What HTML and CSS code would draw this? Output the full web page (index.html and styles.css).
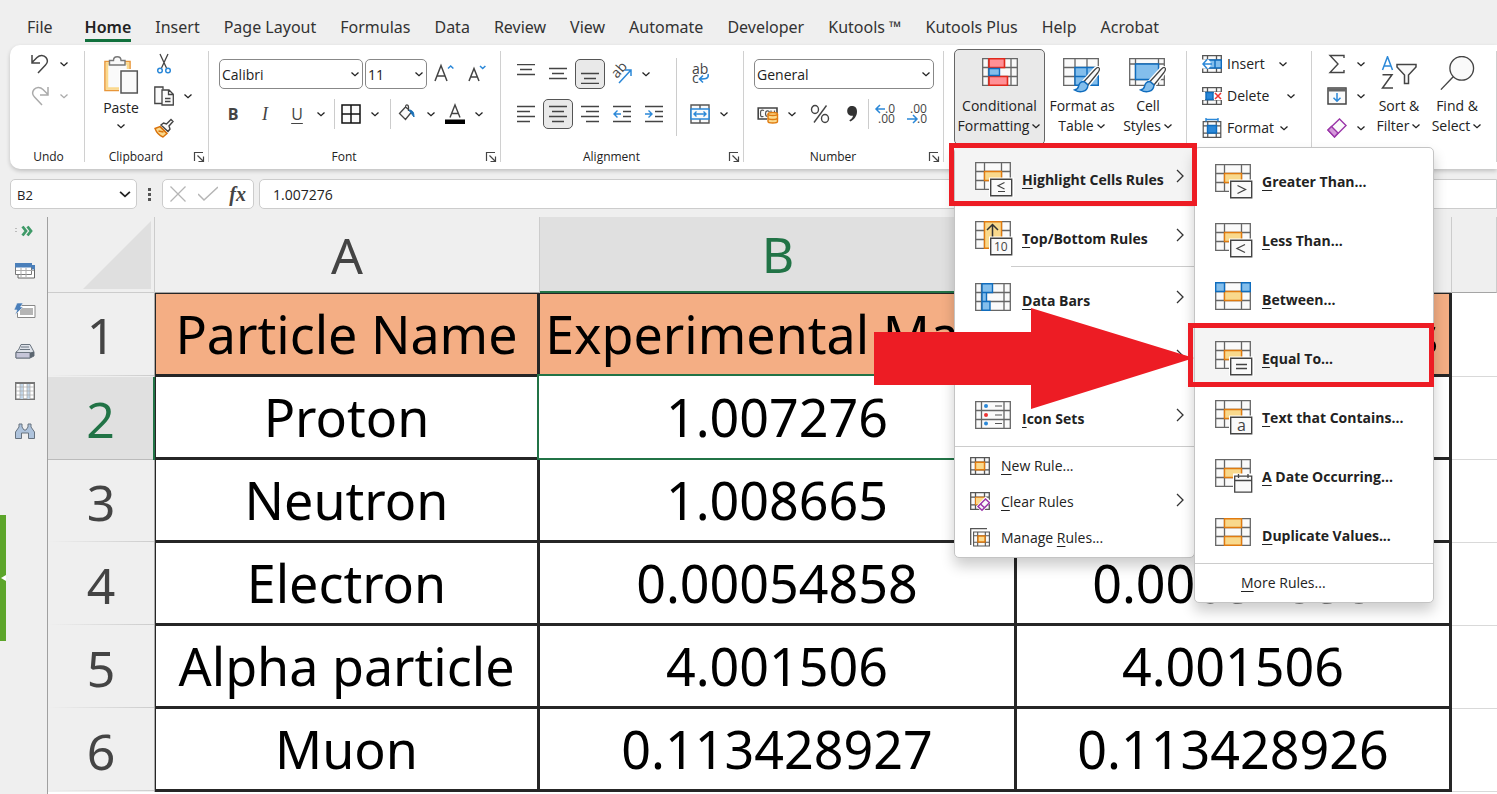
FILE: index.html
```html
<!DOCTYPE html>
<html lang="en">
<head>
<meta charset="utf-8">
<title>Particle masses</title>
<link rel="stylesheet" href="styles.css">
</head>
<body>
<svg class="defs" aria-hidden="true">
  <symbol id="chev" viewBox="0 0 10 10"><path d="M1.5 3.5 5 6.7 8.500 3.500" fill="none" stroke="currentColor" stroke-width="1.300"/></symbol>
  <symbol id="launch" viewBox="0 0 12 12"><path d="M1.500 10V1.500H10M4.500 4.500 10 10M10.500 5.500v5h-5" fill="none" stroke="#444" stroke-width="1.200"/></symbol>
  <symbol id="next" viewBox="0 0 8 14"><path d="M1 1l6 6-6 6" fill="none" stroke="#333" stroke-width="1.300"/></symbol>
  <symbol id="grid" viewBox="0 0 40 35"><path d="M.7.7h34.600v26.600H.7zM.7 9.500h34.600M.7 18.500h34.600M9.500.7v26.600M26.500.7v26.600" fill="#fafafa" stroke="#666" stroke-width="1.300"/></symbol>
  <symbol id="rule" viewBox="0 0 40 35"><use href="#grid"/><path d="M9.500 9.500h17v9h-17z" fill="#f9d98c" stroke="#e07b10" stroke-width="1.400"/><path d="M14 15.500h25v20H14z" fill="#fff"/><path d="M15.700 17.200h21v16.500h-21z" fill="#fafafa" stroke="#444" stroke-width="1.400"/></symbol>
  <symbol id="mini" viewBox="0 0 20 18"><path d="M.7.7h18.600v16.600H.7zM.7 5.200h18.600M.7 12.800h18.600M5.500.7v16.600M14.500.7v16.600" fill="#fafafa" stroke="#555" stroke-width="1.300"/></symbol>
  <symbol id="brush" viewBox="0 0 28 27"><path d="M25.500 1.500c2 1 .5 3.500-.5 5L15 19l-4-3.500L22 3.500c1-1 2.500-2.500 3.500-2z" fill="#f5f5f5" stroke="#fff" stroke-width="4"/><path d="M25.500 1.500c2 1 .5 3.500-.5 5L15 19l-4-3.500L22 3.500c1-1 2.500-2.500 3.500-2z" fill="#fafafa" stroke="#444" stroke-width="1.300"/><path d="M11 15.500c-4 0-5 2-5.500 5-.5 2-2 3-4 3.500 5 3 13 2.500 13.500-5z" fill="#83beec" stroke="#0f6cbd" stroke-width="1.400"/></symbol>
</svg>

<nav class="tabs" aria-label="Ribbon tabs">
  <a href="#file">File</a><a href="#home" class="current">Home</a><a href="#insert">Insert</a><a href="#layout">Page Layout</a><a href="#formulas">Formulas</a><a href="#data">Data</a><a href="#review">Review</a><a href="#view">View</a><a href="#automate">Automate</a><a href="#developer">Developer</a><a href="#kutools">Kutools ™</a><a href="#kutools-plus">Kutools Plus</a><a href="#help">Help</a><a href="#acrobat">Acrobat</a>
</nav>

<section class="ribbon" aria-label="Home">
  <div class="group undo">
    <div class="stack">
      <div class="row">
        <button class="ib" aria-label="Undo"><svg width="20" height="20" viewBox="0 0 20 20"><path d="M2 1v8h8M2 8.500l5-5c3-3 7-2.500 9 0 2 2.500 1.500 5.500-.5 7.500L8 19" fill="none" stroke="#444" stroke-width="1.500"/></svg></button>
        <button class="cb" aria-label="Undo options"><svg><use href="#chev"/></svg></button>
      </div>
      <div class="row faded">
        <button class="ib" aria-label="Redo"><svg width="20" height="20" viewBox="0 0 20 20"><path d="M18 1v8h-8M18 8.500l-5-5c-3-3-7-2.500-9 0-2 2.500-1.500 5.500.5 7.500L12 19" fill="none" stroke="#aaa" stroke-width="1.500"/></svg></button>
        <button class="cb" aria-label="Redo options"><svg><use href="#chev"/></svg></button>
      </div>
    </div>
    <div class="foot"><span>Undo</span></div>
  </div>

  <div class="group clipboard">
    <div class="split">
      <button class="big paste"><svg width="36" height="40" viewBox="0 0 36 40"><path d="M2 6.500h25v29H2z" fill="#fafafa" stroke="#e8963a" stroke-width="1.600"/><path d="M4 8.500h21v25H4z" fill="none" stroke="#fbd98d" stroke-width="2.500"/><path d="M6.500 10V5.500h4c0-5 7.500-5 7.500 0h4V10z" fill="#fafafa" stroke="#777" stroke-width="1.400"/><path d="M16 14h20v26H16z" fill="#fff"/><path d="M18 16h16.300v22H18z" fill="#fafafa" stroke="#555" stroke-width="1.500"/></svg><span>Paste</span><svg class="chev"><use href="#chev"/></svg></button>
      <div class="stack">
        <div class="row"><button class="ib" aria-label="Cut"><svg width="14" height="20" viewBox="0 0 14 20"><path d="M3 0l6.500 14M11 0L4.500 14" stroke="#444" stroke-width="1.300"/><circle cx="3" cy="16.500" r="2.300" fill="none" stroke="#2b88d8" stroke-width="1.500"/><circle cx="11" cy="16.500" r="2.300" fill="none" stroke="#2b88d8" stroke-width="1.500"/></svg></button></div>
        <div class="row"><button class="ib" aria-label="Copy"><svg width="20" height="20" viewBox="0 0 20 20"><path d="M9 3.500V1H.8v16.500H8" fill="#fafafa" stroke="#444" stroke-width="1.300"/><path d="M8 4h7l4.300 4.300V19H8zM14.500 4v4.500h4.500M11 12.500h5.500M11 15.500h5.500" fill="#fafafa" stroke="#444" stroke-width="1.300"/></svg></button><button class="cb" aria-label="Copy options"><svg><use href="#chev"/></svg></button></div>
        <div class="row"><button class="ib" aria-label="Format Painter"><svg width="20" height="20" viewBox="0 0 20 20"><path d="M1 10.500l5-2 7 7-4 3.500c-4-1.500-6.500-4.500-8-8.500z" fill="#fbd98d" stroke="#d9720b" stroke-width="1.400"/><path d="M4.500 13l5 1M6 8.500l7 7" stroke="#d9720b" stroke-width="1.400"/><path d="M7 7l2.500-2 3 1L17 1.500 19 3.500 15 8l1 3-2 2.500z" fill="#fafafa" stroke="#444" stroke-width="1.400"/></svg></button></div>
      </div>
    </div>
    <div class="foot"><span>Clipboard</span><button aria-label="Clipboard settings"><svg><use href="#launch"/></svg></button></div>
  </div>

  <div class="group font">
    <div class="rows">
      <div class="row">
        <label class="sel face"><select aria-label="Font"><option>Calibri</option></select><svg><use href="#chev"/></svg></label>
        <label class="sel size"><select aria-label="Font size"><option>11</option></select><svg><use href="#chev"/></svg></label>
        <button class="ib" aria-label="Increase font size"><svg width="20" height="20" viewBox="0 0 20 20"><path d="M1 17L7 1.500l6 15.500M3 12h8" fill="none" stroke="#444" stroke-width="1.500"/><path d="M14 4.500L16.700 2l2.700 2.500" fill="none" stroke="#2b88d8" stroke-width="1.500"/></svg></button>
        <button class="ib" aria-label="Decrease font size"><svg width="20" height="20" viewBox="0 0 20 20"><path d="M3 17L8 4.500l5 12.500M5 13h6.300" fill="none" stroke="#444" stroke-width="1.500"/><path d="M14 2l2.700 2.500L19.400 2" fill="none" stroke="#2b88d8" stroke-width="1.500"/></svg></button>
      </div>
      <div class="row second">
        <button class="ib glyph b">B</button><button class="ib glyph i">I</button><button class="ib glyph u">U</button><button class="cb" aria-label="Underline options"><svg><use href="#chev"/></svg></button>
        <i class="sep"></i>
        <button class="ib" aria-label="Borders"><svg width="20" height="20" viewBox="0 0 20 20"><path d="M1 1h18v18H1zM10 1v18M1 10h18" fill="#fafafa" stroke="#111" stroke-width="1.500"/></svg></button><button class="cb" aria-label="Border options"><svg><use href="#chev"/></svg></button>
        <i class="sep wide"></i>
        <button class="ib" aria-label="Fill Color"><svg width="18" height="20" viewBox="0 0 18 20"><path d="M1.500 9.500L7.500 3l6 5-6 7.500zM7.500 3c0-3 3-2.500 3 0v4" fill="#fafafa" stroke="#444" stroke-width="1.300"/><path d="M11 6c4 0 5 3 5 7l-3-4z" fill="#1a6fb5" stroke="#1a6fb5"/></svg></button><button class="cb" aria-label="Fill options"><svg><use href="#chev"/></svg></button>
        <button class="ib" aria-label="Font Color"><svg width="20" height="20" viewBox="0 0 20 20"><path d="M5 13.500L10 1l5 12.500M6.700 9.500h6.700" fill="none" stroke="#444" stroke-width="1.400"/><path d="M0 15.500h20v4.500H0z" fill="#000"/></svg></button><button class="cb" aria-label="Font color options"><svg><use href="#chev"/></svg></button>
      </div>
    </div>
    <div class="foot"><span>Font</span><button aria-label="Font settings"><svg><use href="#launch"/></svg></button></div>
  </div>

  <div class="group align">
    <div class="split">
      <div class="rows">
        <div class="row">
          <button class="ib" aria-label="Top Align"><svg width="18" height="20" viewBox="0 0 18 20"><path d="M0 .700h18M3 5.500h12M0 10.500h18" stroke="#444" stroke-width="1.300"/></svg></button>
          <button class="ib" aria-label="Middle Align"><svg width="18" height="20" viewBox="0 0 18 20"><path d="M0 4.500h18M3 9.500h12M0 14.500h18" stroke="#444" stroke-width="1.300"/></svg></button>
          <button class="ib on" aria-label="Bottom Align"><svg width="18" height="20" viewBox="0 0 18 20"><path d="M0 9.500h18M3 14.500h12M0 19.300h18" stroke="#444" stroke-width="1.300"/></svg></button>
          <button class="ib" aria-label="Orientation"><svg width="22" height="22" viewBox="0 0 22 22"><text class="g14" transform="translate(6 16) rotate(-48)">ab</text><path d="M8 20L19.500 7.500M14 7h6v6" fill="none" stroke="#2b88d8" stroke-width="1.500"/></svg></button><button class="cb" aria-label="Orientation options"><svg><use href="#chev"/></svg></button>
        </div>
        <div class="row">
          <button class="ib" aria-label="Align Left"><svg width="18" height="18" viewBox="0 0 18 18"><path d="M0 1.500h18M0 6.500h13M0 11.500h18M0 16.500h13" stroke="#444" stroke-width="1.300"/></svg></button>
          <button class="ib on" aria-label="Center"><svg width="18" height="18" viewBox="0 0 18 18"><path d="M0 1.500h18M3 6.500h12M0 11.500h18M3 16.500h12" stroke="#444" stroke-width="1.300"/></svg></button>
          <button class="ib" aria-label="Align Right"><svg width="18" height="18" viewBox="0 0 18 18"><path d="M0 1.500h18M5 6.500h13M0 11.500h18M5 16.500h13" stroke="#444" stroke-width="1.300"/></svg></button>
          <button class="ib" aria-label="Decrease Indent"><svg width="18" height="18" viewBox="0 0 18 18"><path d="M0 1.500h18M10 6.500h8M10 11.500h8M0 16.500h18" stroke="#444" stroke-width="1.300"/><path d="M8 9H1M4.500 5.500L1 9l3.500 3.500" fill="none" stroke="#2b88d8" stroke-width="1.400"/></svg></button>
          <button class="ib" aria-label="Increase Indent"><svg width="18" height="18" viewBox="0 0 18 18"><path d="M0 1.500h18M10 6.500h8M10 11.500h8M0 16.500h18" stroke="#444" stroke-width="1.300"/><path d="M0 9h7M3.500 5.500L7 9l-3.500 3.500" fill="none" stroke="#2b88d8" stroke-width="1.400"/></svg></button>
        </div>
      </div>
      <i class="sep tall"></i>
      <div class="rows">
        <div class="row"><button class="ib" aria-label="Wrap Text"><svg width="20" height="24" viewBox="0 0 20 24"><text class="g14" x="2" y="12">ab</text><text class="g14" x="2" y="21">c</text><path d="M18 12c1 4-1 5-8 5M13 13.500L9.500 17l3.500 3.500" fill="none" stroke="#2b88d8" stroke-width="1.600"/></svg></button></div>
        <div class="row"><button class="ib" aria-label="Merge and Center"><svg width="20" height="20" viewBox="0 0 20 20"><path d="M1 1h18v18H1zM10 1v18" fill="#fafafa" stroke="#555" stroke-width="1.400"/><path d="M1 5h18v10H1z" fill="#fafafa" stroke="#2b88d8" stroke-width="1.500"/><path d="M4 10h12M6.500 7.500L4 10l2.500 2.500M13.500 7.500L16 10l-2.500 2.500" fill="none" stroke="#2b88d8" stroke-width="1.400"/></svg></button><button class="cb" aria-label="Merge options"><svg><use href="#chev"/></svg></button></div>
      </div>
    </div>
    <div class="foot"><span>Alignment</span><button aria-label="Alignment settings"><svg><use href="#launch"/></svg></button></div>
  </div>

  <div class="group number">
    <div class="rows">
      <div class="row"><label class="sel format"><select aria-label="Number format"><option>General</option></select><svg><use href="#chev"/></svg></label></div>
      <div class="row second">
        <button class="ib" aria-label="Accounting format"><svg width="22" height="20" viewBox="0 0 22 20"><path d="M10 15H1.200V4H20v5" fill="#fafafa" stroke="#444" stroke-width="1.600"/><path d="M7 6.500c-3-1-3.500 0-3.500 3s.5 3.500 3 3M12.500 8c-1-2-4-1.500-4 1.500 0 2 .5 3 2 3M14 6.500v2M17.500 6.500v2" fill="none" stroke="#555" stroke-width="1.200"/><path d="M11 10c0-2 9.500-2 9.500 0v7.500c0 2-9.500 2-9.500 0z" fill="#fbd98d" stroke="#e07b10" stroke-width="1.400"/><path d="M11 10c0 2 9.500 2 9.500 0M11 14c0 2 9.500 2 9.500 0" fill="none" stroke="#e07b10" stroke-width="1.400"/></svg></button><button class="cb" aria-label="Currency options"><svg><use href="#chev"/></svg></button>
        <button class="ib shift" aria-label="Percent"><svg width="20" height="20" viewBox="0 0 20 20"><path d="M16.500 1.500L4 18.500" stroke="#444" stroke-width="1.400"/><ellipse cx="5" cy="5.500" rx="3.500" ry="4" fill="none" stroke="#444" stroke-width="1.400"/><ellipse cx="15" cy="14.500" rx="3.500" ry="4" fill="none" stroke="#444" stroke-width="1.400"/></svg></button>
        <button class="ib" aria-label="Comma style"><svg width="12" height="18" viewBox="0 0 12 18"><path d="M6 1c3.300 0 5 2.200 5 5.500 0 4.500-2.700 8-6.700 10l-1-1.200c2.200-1.300 3.500-2.800 3.700-4.500C3.500 11.300 1.200 9 1.200 6S3.200 1 6 1z" fill="#333"/></svg></button>
        <i class="sep thin"></i>
        <button class="ib" aria-label="Increase Decimal"><svg width="20" height="22" viewBox="0 0 20 22"><text class="g12" x="10" y="10">.0</text><text class="g12" x="3" y="20">.00</text><path d="M10 6H1M5 2L1 6l4 4" fill="none" stroke="#2b88d8" stroke-width="1.500"/></svg></button>
        <button class="ib" aria-label="Decrease Decimal"><svg width="20" height="22" viewBox="0 0 20 22"><text class="g12" x="3" y="10">.00</text><text class="g12" x="10" y="20">.0</text><path d="M0 16h10M6 12l4 4-4 4" fill="none" stroke="#2b88d8" stroke-width="1.500"/></svg></button>
      </div>
    </div>
    <div class="foot"><span>Number</span><button aria-label="Number settings"><svg><use href="#launch"/></svg></button></div>
  </div>

  <div class="group styles">
    <div class="split">
      <button class="big pressed"><svg width="36" height="36" viewBox="0 0 36 36"><path d="M.7.700h34.600v26.600H.7zM.7 9.500h34.600M.7 18.500h34.600M6.500.7v26.600M29 .7v26.600" fill="#fafafa" stroke="#666" stroke-width="1.300"/><path d="M7 .7h15.500v8.800H7zM7 18.500h18.500v8.800H7z" fill="#ff9096" stroke="#e0281c" stroke-width="1.600"/><path d="M7 10.500h10.500v7H7z" fill="#83beec" stroke="#0f6cbd" stroke-width="1.400"/></svg><span>Conditional</span><span>Formatting <svg class="chev"><use href="#chev"/></svg></span></button>
      <button class="big table"><svg width="38" height="36" viewBox="0 0 38 36"><path d="M.7.700h34.600v26.600H.7zM.7 9.500h34.600M.7 18.500h34.600M12 .7v26.600M24 .7v26.600" fill="#fafafa" stroke="#666" stroke-width="1.300"/><path d="M12 9.500h23.300v17.800H12zM12 18.500h23M24 9.500v17.800" fill="#83beec" stroke="#0f6cbd" stroke-width="1.400"/><use href="#brush" x="10" y="8" width="28" height="27"/></svg><span>Format as</span><span>Table <svg class="chev"><use href="#chev"/></svg></span></button>
      <button class="big cell"><svg width="38" height="36" viewBox="0 0 38 36"><path d="M.7.700h34.600v26.600H.7zM.7 6h34.600M.7 21.500h34.600M6.500.7v26.600M29.500.7v26.600" fill="#fafafa" stroke="#666" stroke-width="1.300"/><path d="M6.500 6h23v15.500h-23z" fill="#83beec" stroke="#0f6cbd" stroke-width="1.400"/><use href="#brush" x="10" y="8" width="28" height="27"/></svg><span>Cell</span><span>Styles <svg class="chev"><use href="#chev"/></svg></span></button>
    </div>
  </div>

  <div class="group cells">
    <div class="stack">
      <button class="line"><svg width="20" height="18" viewBox="0 0 20 18"><use href="#mini"/><path d="M5 5h14.300v8H5zM13 5v8" fill="#83beec" stroke="#0f6cbd" stroke-width="1.400"/><path d="M-1 4.500h7.500l2 2.500v4l-2 2.500H-1z" fill="#fff"/><path d="M10 9H1M5 4.500L1 9l4 4.500" fill="none" stroke="#2b88d8" stroke-width="1.500"/></svg><span class="wider">Insert</span><svg class="chev"><use href="#chev"/></svg></button>
      <button class="line"><svg width="20" height="18" viewBox="0 0 20 18"><use href="#mini"/><path d="M12 5h9v8h-9z" fill="#fff"/><path d="M0 5h3v8H0z" fill="#fff"/><path d="M4 5.500h7v7H4z" fill="#2b88d8" stroke="#0f6cbd" stroke-width="1.400"/><path d="M13 6l6 6M19 6l-6 6" stroke="#e33" stroke-width="1.500"/></svg><span class="widest">Delete</span><svg class="chev"><use href="#chev"/></svg></button>
      <button class="line"><svg width="20" height="20" viewBox="0 0 20 20"><use href="#mini" y="3" width="20" height="17"/><path d="M5.500 7.500h9v7.500h-9z" fill="#2b88d8" stroke="#0f6cbd" stroke-width="1.400"/><path d="M4 1.500h12M4 0v3.500M16 0v3.500" stroke="#2b88d8" stroke-width="1.400"/></svg><span>Format</span><svg class="chev"><use href="#chev"/></svg></button>
    </div>
  </div>

  <div class="group editing">
    <div class="split">
      <div class="stack">
        <div class="row"><button class="ib" aria-label="AutoSum"><svg width="18" height="20" viewBox="0 0 18 20"><path d="M16 4V1.500H2L10 10l-8 8.500h14V16" fill="none" stroke="#444" stroke-width="1.400"/></svg></button><button class="cb" aria-label="Sum options"><svg><use href="#chev"/></svg></button></div>
        <div class="row"><button class="ib" aria-label="Fill"><svg width="20" height="18" viewBox="0 0 20 18"><path d="M1 1h18v16H1z" fill="#fafafa" stroke="#444" stroke-width="1.500"/><path d="M1 3h18" stroke="#666" stroke-width="3"/><path d="M10 6v8M6.500 10.800L10 14.300l3.500-3.500" fill="none" stroke="#2b88d8" stroke-width="1.500"/></svg></button><button class="cb" aria-label="Fill direction"><svg><use href="#chev"/></svg></button></div>
        <div class="row"><button class="ib" aria-label="Clear"><svg width="20" height="20" viewBox="0 0 20 20"><path d="M1 12L12.500 1 19 7.500 7.500 19z" fill="#fafafa" stroke="#9a35a8" stroke-width="1.400"/><path d="M1 12l3.500-3.500L11 15l-3.500 4z" fill="#d59adb" stroke="#9a35a8" stroke-width="1.400"/></svg></button><button class="cb" aria-label="Clear options"><svg><use href="#chev"/></svg></button></div>
      </div>
      <button class="big sort"><svg width="36" height="36" viewBox="0 0 36 36"><path d="M1.500 14L6.500.7 11.500 14M3 10h7" fill="none" stroke="#2b88d8" stroke-width="1.500"/><path d="M1.500 18.700h9.500L1.500 32H12" fill="none" stroke="#444" stroke-width="1.500"/><path d="M16 8.500h19V11l-7.500 8v8.500h-4V19L16 11z" fill="#fafafa" stroke="#444" stroke-width="1.500"/></svg><span>Sort &amp;</span><span>Filter <svg class="chev"><use href="#chev"/></svg></span></button>
      <button class="big find"><svg width="38" height="38" viewBox="0 0 38 38"><circle cx="24" cy="13" r="12.500" fill="#fafafa" stroke="#444" stroke-width="1.400"/><path d="M15 22L2 35.500" stroke="#444" stroke-width="1.500"/></svg><span>Find &amp;</span><span>Select <svg class="chev"><use href="#chev"/></svg></span></button>
    </div>
  </div>
</section>

<section class="formula" aria-label="Formula bar">
  <label class="namebox"><select aria-label="Name box"><option>B2</option></select><svg><use href="#chev"/></svg></label>
  <i class="dots"></i>
  <div class="fx">
    <button aria-label="Cancel"><svg width="16" height="16" viewBox="0 0 16 16"><path d="M.5.500l15 15M15.500.500l-15 15" stroke="#b5b5b5" stroke-width="1.300"/></svg></button>
    <button aria-label="Enter"><svg width="20" height="16" viewBox="0 0 20 16"><path d="M0 8l6 6L20 1" fill="none" stroke="#b5b5b5" stroke-width="1.500"/></svg></button>
    <button class="fn" aria-label="Insert function">fx</button>
  </div>
  <input class="value" aria-label="Formula" value="1.007276">
</section>

<main class="work">
  <aside class="pane">
    <button aria-label="Expand"><svg width="20" height="12" viewBox="0 0 20 12"><path d="M0 3.500h2M0 6.500h2" stroke="#bbb"/><path d="M7.500 1.500L11 6l-3.500 4.500M12.500 1.500L16 6l-3.500 4.500" fill="none" stroke="#3f9a68" stroke-width="2.800"/></svg></button>
    <button aria-label="Workbooks"><svg width="20" height="16" viewBox="0 0 20 16"><path d="M3 3h16.500v12H3z" fill="#fff" stroke="#666"/><path d="M.5.5h16v11H.5z" fill="#fff" stroke="#777"/><path d="M0 0h17v4.500H0zM17 2h3v4.500h-3z" fill="#4a7fba"/><path d="M1 7.500h18M6 5v9M11 5v9" stroke="#aaa"/></svg></button>
    <button aria-label="AutoText"><svg width="22" height="16" viewBox="0 0 22 16"><path d="M3.500 2.500h17.500v12H3.500z" fill="#fff" stroke="#888"/><path d="M6 5h13v7H6z" fill="#b5b5b5"/><path d="M3 0h6L6.500 4H9L1 12l2-5H0z" fill="#4a7fba" stroke="#efefef" stroke-width=".6"/></svg></button>
    <button aria-label="Printing"><svg width="20" height="16" viewBox="0 0 20 16"><path d="M3.500 7L6 1.500h9L19 9v4l-4 2H1V9z" fill="#dfe3ea" stroke="#6b7580"/><path d="M1 9.500h14V15H1z" fill="#c5c5d8" stroke="#6b7580"/><path d="M15 9.500l4-1V13l-4 2z" fill="#5c6670"/><path d="M6 4h8M5 6.500h10" stroke="#6b7580"/></svg></button>
    <button aria-label="Columns"><svg width="20" height="18" viewBox="0 0 20 18"><path d="M.7.700h18.600v16.600H.7z" fill="#fff" stroke="#777" stroke-width="1.400"/><path d="M5 1h3v16H5zM12 1h3v16h-3z" fill="#c3d7ea"/><path d="M1 5h18M1 9h18M1 13h18M5 1v16M8.500 1v16M12 1v16M15 1v16" stroke="#aaa" stroke-width=".7"/><path d="M0 1h20" stroke="#777" stroke-width="2"/></svg></button>
    <button aria-label="Find"><svg width="20" height="16" viewBox="0 0 20 16"><path d="M.5 15.500V9L4 4V1h3v3l2 3h2l2-3V1h3v3l3.500 5v6.500h-6V10h-7v5.500z" fill="#aec3dc" stroke="#66727f"/></svg></button>
    <button class="handle" aria-label="Show pane"><svg width="5" height="6" viewBox="0 0 5 6"><path d="M5 0v6L0 3z" fill="#fff"/></svg></button>
  </aside>
  <div class="sheet">
    <table>
      <colgroup><col class="ch"><col class="ca"><col class="cbx"><col class="cc"><col></colgroup>
      <thead><tr><th class="corner"><svg width="68" height="68" viewBox="0 0 68 68"><path d="M68 0v68H0z" fill="#dfdfdf"/></svg></th><th>A</th><th class="picked">B</th><th>C</th><th></th></tr></thead>
      <tbody>
        <tr class="title"><th>1</th><td>Particle Name</td><td>Experimental Mass</td><td>Theoretical Mass</td><td></td></tr>
        <tr><th class="picked">2</th><td>Proton</td><td class="active">1.007276</td><td>1.007276</td><td></td></tr>
        <tr><th>3</th><td>Neutron</td><td>1.008665</td><td>1.008665</td><td></td></tr>
        <tr><th>4</th><td>Electron</td><td>0.00054858</td><td>0.00054858</td><td></td></tr>
        <tr><th>5</th><td>Alpha particle</td><td>4.001506</td><td>4.001506</td><td></td></tr>
        <tr><th>6</th><td>Muon</td><td>0.113428927</td><td>0.113428926</td><td></td></tr>
      </tbody>
    </table>
  </div>
</main>

<div class="menu main-menu" role="menu">
  <button class="item hot"><svg width="40" height="35" viewBox="0 0 40 35"><use href="#rule"/><path d="M29.500 20.500L23 23.700l6.500 3.300M23 29.500h7" fill="none" stroke="#444" stroke-width="1.200"/></svg><span><u>H</u>ighlight Cells Rules</span><svg class="next"><use href="#next"/></svg></button>
  <button class="item"><svg width="40" height="35" viewBox="0 0 40 35"><use href="#grid"/><path d="M9.500.700h17v26.600h-17z" fill="#f9d98c" stroke="#e07b10" stroke-width="1.400"/><path d="M17.500 18V3.500M12 9l5.500-5.500L23 9" fill="none" stroke="#333" stroke-width="1.500"/><path d="M14 15.500h25v20H14z" fill="#fff"/><path d="M15.700 17.200h21v16.500h-21z" fill="#fafafa" stroke="#444" stroke-width="1.400"/><text class="g12" x="19" y="30">10</text></svg><span><u>T</u>op/Bottom Rules</span><svg class="next"><use href="#next"/></svg></button>
  <hr class="inset">
  <button class="item"><svg width="40" height="35" viewBox="0 0 40 35"><path d="M.7.700h34.600v26.600H.7zM.7 9.500h34.600M.7 18.500h34.600M6.500.7v26.600M29 .7v26.600" fill="#fafafa" stroke="#666" stroke-width="1.300"/><path d="M7 .7h10.500v8.800H7zM7 9.500h4.500v9H7zM7 18.500h8v8.800H7z" fill="#83beec" stroke="#0f6cbd" stroke-width="1.400"/></svg><span><u>D</u>ata Bars</span><svg class="next"><use href="#next"/></svg></button>
  <button class="item"><svg width="40" height="35" viewBox="0 0 40 35"><use href="#grid"/></svg><span>Color <u>S</u>cales</span><svg class="next"><use href="#next"/></svg></button>
  <button class="item"><svg width="40" height="35" viewBox="0 0 40 35"><path d="M.7.700h34.600v26.600H.7zM.7 9.500h34.600M.7 18.500h34.600M6.500.7v26.600M29 .7v26.600" fill="#fafafa" stroke="#666" stroke-width="1.300"/><path d="M20 5h7M20 14h7M20 22.500h7" stroke="#555"/><circle cx="11" cy="5" r="2" fill="#2b88d8"/><circle cx="11" cy="14" r="2" fill="#e33"/><circle cx="11" cy="22.500" r="2" fill="#2b88d8"/></svg><span><u>I</u>con Sets</span><svg class="next"><use href="#next"/></svg></button>
  <hr>
  <button class="item small"><svg width="20" height="18" viewBox="0 0 20 18"><use href="#mini"/><path d="M5.500 5.200h9v7.600h-9z" fill="#fbd98d" stroke="#e07b10" stroke-width="1.400"/></svg><span><u>N</u>ew Rule...</span></button>
  <button class="item small"><svg width="20" height="20" viewBox="0 0 20 20"><use href="#mini" width="20" height="18"/><path d="M5.500 5.200h9v7.600h-9z" fill="#fbd98d" stroke="#e07b10"/><path d="M6 14.500L15.500 4.500l6 5-9 11z" fill="#fff"/><path d="M8 14.500l7.500-7.500 4 3.700-7.500 7.600z" fill="#fafafa" stroke="#9a35a8" stroke-width="1.500"/><path d="M10.500 12l4 3.700" stroke="#9a35a8" stroke-width="1.500"/></svg><span><u>C</u>lear Rules</span><svg class="next"><use href="#next"/></svg></button>
  <button class="item small"><svg width="20" height="20" viewBox="0 0 20 20"><path d="M.7 17V.7H17" fill="none" stroke="#555" stroke-width="1.300"/><use href="#mini" x="3" y="3" width="17" height="16"/><path d="M8 8h7v6H8z" fill="#fbd98d" stroke="#e07b10" stroke-width="1.400"/></svg><span>Manage <u>R</u>ules...</span></button>
</div>

<div class="menu sub-menu" role="menu">
  <button class="item"><svg width="40" height="35" viewBox="0 0 40 35"><use href="#rule"/><path d="M22.500 21.500l8 4-8 4" fill="none" stroke="#444" stroke-width="1.300"/></svg><span><u>G</u>reater Than...</span></button>
  <button class="item"><svg width="40" height="35" viewBox="0 0 40 35"><use href="#rule"/><path d="M30 21.500l-8 4 8 4" fill="none" stroke="#444" stroke-width="1.300"/></svg><span><u>L</u>ess Than...</span></button>
  <button class="item"><svg width="40" height="35" viewBox="0 0 40 35"><use href="#grid"/><path d="M9.500 9.500h17v9h-17z" fill="#f9d98c" stroke="#e07b10" stroke-width="1.400"/><path d="M.7.700h8.800v8.800H.7zM26.500.7h8.800v8.800h-8.800z" fill="#83beec" stroke="#0f6cbd" stroke-width="1.400"/></svg><span><u>B</u>etween...</span></button>
  <button class="item hot"><svg width="40" height="35" viewBox="0 0 40 35"><use href="#rule"/><path d="M21 23.500h11M21 27.500h11" stroke="#444" stroke-width="1.300"/></svg><span><u>E</u>qual To...</span></button>
  <button class="item"><svg width="40" height="35" viewBox="0 0 40 35"><use href="#rule"/><text class="g16" x="22" y="31">a</text></svg><span><u>T</u>ext that Contains...</span></button>
  <button class="item"><svg width="40" height="35" viewBox="0 0 40 35"><use href="#grid"/><path d="M9.500 9.500h17v9h-17z" fill="#f9d98c" stroke="#e07b10" stroke-width="1.400"/><path d="M18 14.500h20v20H18z" fill="#fff"/><path d="M19.700 17.200h17v16h-17zM19.700 21.500h17M23.500 15v4M33 15v4" fill="#fafafa" stroke="#444" stroke-width="1.300"/></svg><span><u>A</u> Date Occurring...</span></button>
  <button class="item"><svg width="40" height="35" viewBox="0 0 40 35"><use href="#grid"/><path d="M9.500.700h17v8.800h-17zM9.500 18.500h17v8.800h-17z" fill="#f9d98c" stroke="#e07b10" stroke-width="1.400"/></svg><span><u>D</u>uplicate Values...</span></button>
  <hr>
  <button class="item small text-only"><span><u>M</u>ore Rules...</span></button>
</div>

<div class="mark mark-a"></div>
<svg class="arrow" width="320" height="102" viewBox="0 0 320 102"><path d="M0 24h157V0l163 50-163 51V77H0z" fill="#ed1c24"/></svg>
<div class="mark mark-b"></div>
</body>
</html>
```
FILE: styles.css
```css
* { box-sizing: border-box; }

body {
  margin: 0;
  height: 100vh;
  display: flex;
  flex-direction: column;
  position: relative;
  overflow: hidden;
  background: #efefef;
  color: #222;
  font: 14px/20px "Open Sans", "Noto Sans", sans-serif;
}

button, select, input {
  margin: 0;
  padding: 0;
  border: 0;
  background: none;
  color: inherit;
  font: inherit;
}

svg { display: block; flex: none; }
svg text { font-weight: 400; }
.defs { position: absolute; width: 0; height: 0; }

/* Tabs */
.tabs {
  display: flex;
  gap: 24px;
  height: 45px;
  padding: 15px 0 0 27px;
  font-family: "Noto Sans", "Open Sans", sans-serif;
  font-size: 16px;
  line-height: 24px;
  white-space: nowrap;
}
.tabs a { height: 27px; color: #333; text-decoration: none; }
.tabs .current { margin-left: 8px; font-weight: 600; color: #222; border-bottom: 3px solid #10703c; }

/* Ribbon */
.ribbon {
  display: flex;
  height: 124px;
  margin-left: 10px;
  background: #fff;
  border-radius: 10px 0 0 10px;
  box-shadow: 0 2px 4px #0003;
}
.group {
  display: flex;
  flex-direction: column;
  flex: none;
  padding: 6px 0 0;
  background: linear-gradient(#d0d0d0, #d0d0d0) right 6px / 1px 111px no-repeat;
}
.undo { width: 75px; padding-left: 14px; }
.clipboard { width: 124px; }
.font { width: 292px; }
.align { width: 243px; }
.number { width: 200px; }
.styles { width: 243px; }
.cells { width: 125px; }
.editing { flex: 1 0 185px; }

.split { display: flex; }
.stack { display: flex; flex-direction: column; gap: 6px; }
.stack .row, .line { height: 26px; }
.rows { display: flex; flex-direction: column; gap: 10px; padding-top: 8px; }
.font .rows, .number .rows { padding-left: 8px; }
.font .row:first-child, .number .row:first-child { padding-left: 2px; }
.align .rows:first-child { padding-left: 9px; width: 175px; }
.rows .row { height: 30px; }
.row { display: flex; align-items: center; }
.faded { color: #aaa; }

.ib, .cb { display: flex; align-items: center; justify-content: center; height: 30px; flex: none; }
.ib { width: 32px; }
.cb { width: 16px; }
.cb svg, .sel svg, .chev { width: 10px; height: 10px; }
.shift { margin-left: 4px; }
.on { width: 30px; margin: 0 1px; background: #e9e9e9; border: 1px solid #555; border-radius: 5px; }
.glyph { font-size: 16px; color: #444; }
.b { font-weight: 700; }
.i { font-family: "Liberation Serif", serif; font-size: 18px; font-style: italic; }
.u { text-decoration: underline; text-underline-offset: 3px; }
.sep { width: 6px; height: 30px; border-right: 1px solid #ccc; flex: none; }
.wide { width: 8px; }
.thin { width: 1px; }
.tall { width: 1px; height: 78px; margin: 7px 7px 0 0; }
.g12 { font-size: 12px; fill: #444; }
.g14 { font-size: 14px; fill: #444; }
.g16 { font-size: 16px; fill: #444; }
.ib svg { overflow: visible; }

.sel, .namebox { display: grid; align-items: center; }
.sel > *, .namebox > * { grid-area: 1 / 1; }
.sel select, .namebox select {
  appearance: none;
  width: 100%;
  height: 30px;
  border: 1px solid #888;
  border-radius: 5px;
  background: #fff;
  padding: 1px 0 0 2px;
}
.sel svg { justify-self: end; margin-right: 3px; pointer-events: none; }
.face { width: 144px; margin-right: 2px; }
.size { width: 62px; margin-right: 1px; }
.format { width: 180px; }

.big { display: flex; flex-direction: column; align-items: center; white-space: nowrap; }
.big span { display: flex; align-items: center; gap: 2px; }
.paste { width: 54px; margin-left: 9px; padding-top: 4px; }
.paste > span { margin-top: 3px; }
.paste .chev { margin-top: 3px; }
.styles .big, .editing .big { padding-top: 7px; }
.styles .big > svg, .editing .big > svg { margin-bottom: 2px; height: 36px; }
.styles .pressed {
  width: 91px;
  height: 96px;
  margin: -2px 0 0 10px;
  padding-top: 8px;
  background: #e9e9e9;
  border: 1px solid #666;
  border-radius: 5px;
}
.table { width: 74px; }
.cell { width: 58px; }
.sort { width: 58px; }
.find { width: 58px; }
.editing .sort, .editing .find { padding-top: 5px; }
.editing .sort > svg, .editing .find > svg { margin-bottom: 4px; }

.cells .stack { padding-left: 15px; }
.line { display: flex; align-items: center; gap: 5px; }
.line .wider { width: 46px; text-align: left; }
.line .widest { width: 54px; text-align: left; }
.editing .stack { width: 58px; padding-left: 9px; }

.foot { display: flex; align-items: center; height: 24px; margin-top: auto; font-size: 12px; line-height: 16px; }
.foot span { flex: 1; text-align: center; }
.undo .foot { padding-right: 12px; }
.foot button { width: 22px; }
.foot button svg { width: 12px; height: 12px; margin-left: 6px; }

/* Formula bar */
.formula { display: flex; height: 48px; padding: 10px 0 8px 10px; }
.namebox { width: 127px; }
.formula .namebox select { border-color: #ccc; padding-left: 6px; font-size: 13px; }
.namebox svg { width: 14px; height: 14px; justify-self: end; margin-right: 5px; pointer-events: none; }
.dots {
  width: 3px;
  height: 14px;
  margin: 9px 11px 0;
  background: repeating-linear-gradient(#555 0 3px, transparent 3px 5px);
}
.fx { display: flex; align-items: center; justify-content: space-between; width: 92px; padding: 0 7px; border: 1px solid #ccc; border-radius: 5px; background: #fff; }
.fn { font: italic 700 20px/24px "Liberation Serif", serif; color: #444; }
.value { flex: 1; min-width: 0; margin-left: 5px; padding: 2px 0 0 13px; border: 1px solid #ccc; border-radius: 5px 0 0 5px; background: #fff; }

/* Workspace */
.work { display: flex; flex: 1; min-height: 0; }
.pane { display: flex; flex-direction: column; align-items: center; flex: none; width: 48px; padding-top: 4px; gap: 20px; border-right: 1px solid #a0a0a0; position: relative; }
.pane button { height: 20px; display: flex; align-items: center; margin-left: 3px; }
.pane .handle { position: absolute; left: 0; top: 298px; width: 6px; height: 126px; margin: 0; background: #5ca52a; justify-content: flex-end; }

.sheet { flex: 1; min-width: 0; overflow: hidden; background: #fff; }
table { width: 100%; table-layout: fixed; border-collapse: separate; border-spacing: 0; font: 52px/66px "Noto Sans", "Open Sans", sans-serif; color: #000; }
.ch { width: 107px; }
.ca { width: 385px; }
.cbx { width: 477px; }
.cc { width: 435px; }
th, td { padding: 0; font-weight: 400; text-align: center; white-space: nowrap; overflow: hidden; }
th { background: #efefef; color: #444; font-size: 50px; }
thead th { height: 76px; border-bottom: 1px solid #a5a5a5; border-right: 1px solid #ccc; }
thead .corner { padding: 4px 3px 3px 0; border-bottom-color: #ccc; }
.corner svg { margin-left: auto; }
thead .picked { border-bottom: 2px solid #217346; }
.picked { background: #e0e0e0; color: #217346; }
tbody th {
  height: 83px;
  border-right: 1px solid #aaa;
  background: linear-gradient(to right, #efefef, #ccc) 0 calc(100% - 1px) / 100% 1px no-repeat #efefef;
}
tbody .picked { border-right: 2px solid #217346; background: #e0e0e0; box-shadow: inset 0 -1px #bbb; }
td { height: 83px; background: #fff; border-right: 3px solid #262626; border-bottom: 3px solid #262626; }
td:nth-child(2) { border-left: 1px solid #262626; }
td:last-child { border-right: 0; border-bottom: 1px solid #d9d9d9; }
.title td:not(:last-child) { height: 84px; background: #f4ae84; border-top: 1px solid #262626; }
.active { position: relative; overflow: visible; }
.active::after { content: ""; position: absolute; inset: -3px; border: 2px solid #217346; box-shadow: inset 0 0 0 1px #fff; }

/* Menus */
.menu { position: absolute; background: #fff; border: 1px solid #c4c4c4; border-radius: 5px; box-shadow: 0 8px 14px #0003; }
.main-menu { left: 954px; top: 147px; width: 241px; padding-bottom: 2px; }
.sub-menu { left: 1194px; top: 147px; width: 240px; padding: 2px 0; }
.item { display: flex; align-items: center; gap: 7px; width: 100%; height: 59px; padding: 4px 10px 0 20px; font-weight: 700; text-align: left; white-space: nowrap; }
.item u { text-underline-offset: 3px; }
.hot { background: #f4f4f4; }
.next { width: 8px; height: 14px; margin: 0 0 8px auto; }
.small { height: 36px; gap: 11px; padding: 1px 10px 0 15px; font-weight: 400; }
.small .next { margin-bottom: 3px; }
.text-only { padding-left: 46px; }
.menu hr { height: 1px; margin: 0; border: 0; background: #ccc; }
.menu .inset { margin: 0 0 2px 56px; }

/* Callouts over the menus */
.mark { position: absolute; border: 5px solid #ed1c24; pointer-events: none; }
.mark-a { left: 949px; top: 143px; width: 248px; height: 63px; }
.mark-b { left: 1188px; top: 323px; width: 246px; height: 64px; }
.arrow { position: absolute; left: 874px; top: 308px; pointer-events: none; }
```
